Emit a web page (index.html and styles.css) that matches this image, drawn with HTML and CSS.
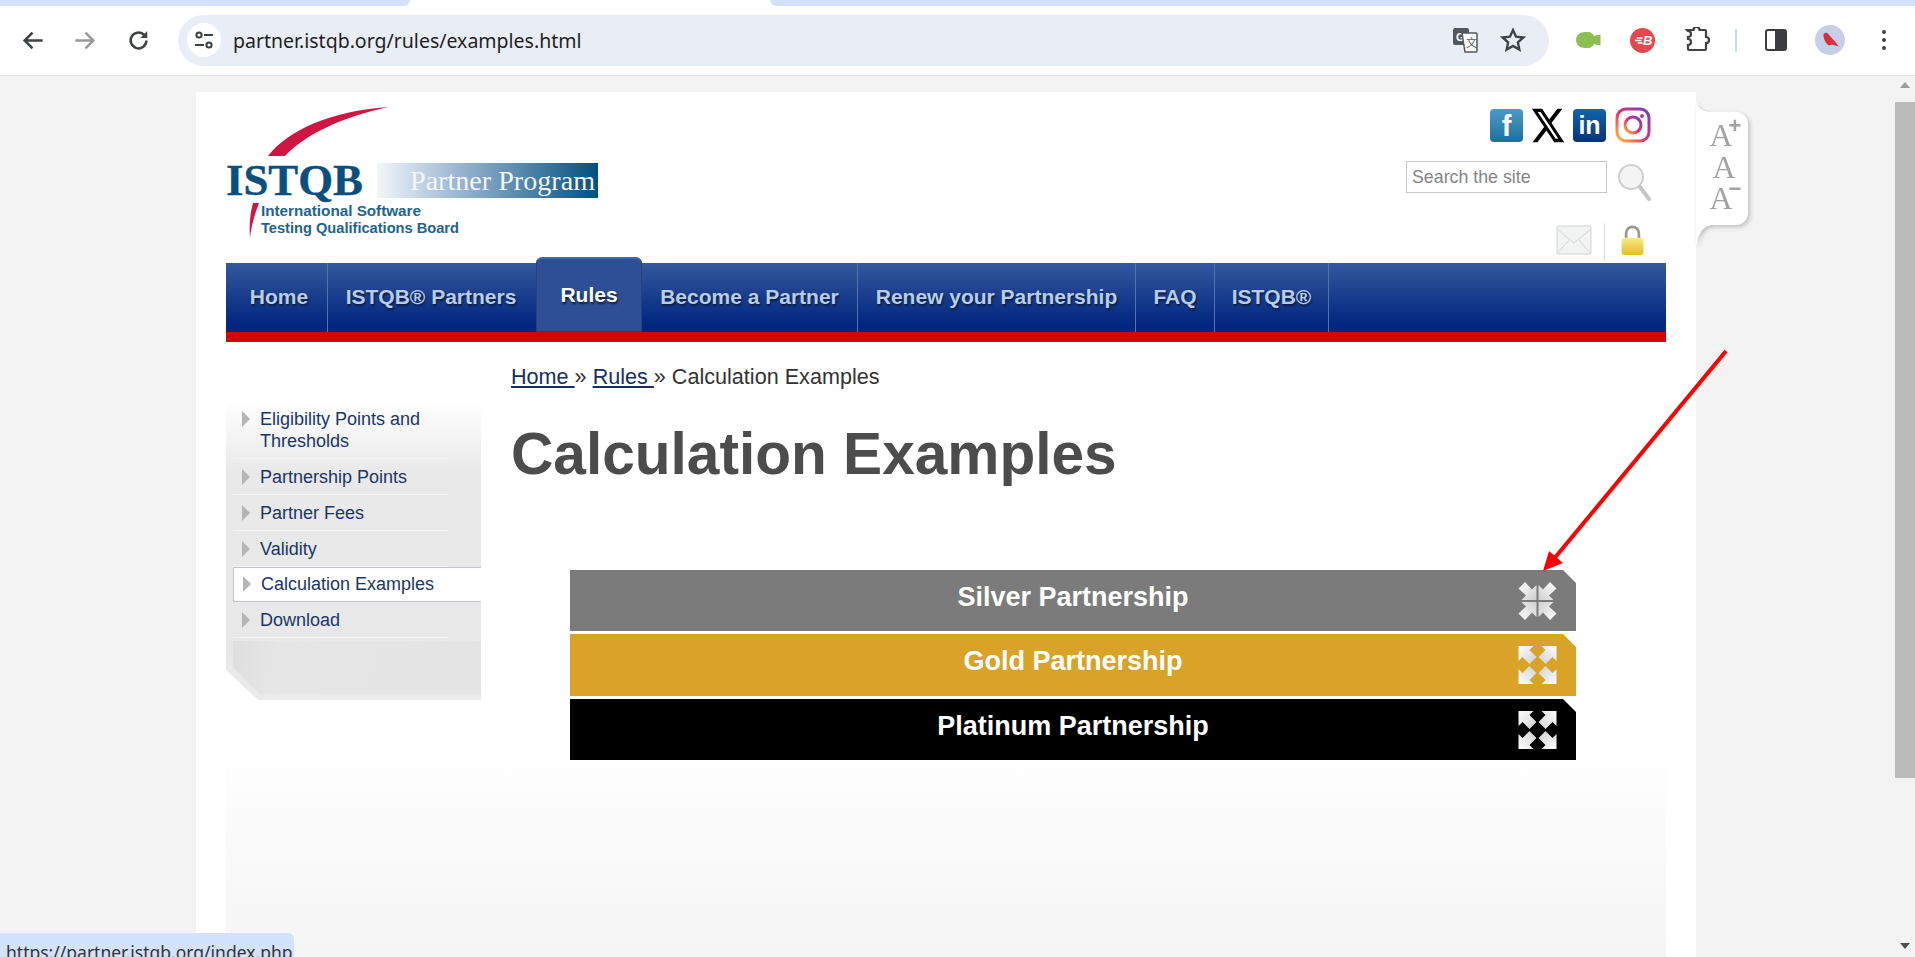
FILE: index.html
```html
<!DOCTYPE html>
<html lang="en">
<head>
<meta charset="utf-8">
<title>Calculation Examples</title>
<link rel="stylesheet" href="styles.css">
</head>
<body>
<header class="chrome">
  <div class="tabstrip"><span class="tab-left"></span><span class="tab-right"></span></div>
  <div class="toolbar">
    <svg class="tb-icon" viewBox="0 0 24 24"><path d="M21 12H5M12 5l-7 7 7 7" class="st-dark"/></svg>
    <svg class="tb-icon fwd" viewBox="0 0 24 24"><path d="M3 12h16M12 5l7 7-7 7" class="st-grey"/></svg>
    <svg class="tb-icon rel" viewBox="0 0 24 24"><path d="M19 12a7 7 0 1 1-2.200-5.100L19 9" class="st-dark"/><path d="M19.800 3.500v6.200h-6.200z" class="fill-dark"/></svg>
    <div class="omnibox">
      <span class="tune"><svg viewBox="0 0 24 24" width="24" height="24"><circle cx="7" cy="7" r="2.600" class="st-thin"/><path d="M12 7h9M3 17h9" class="st-thin"/><circle cx="17" cy="17" r="2.600" class="st-thin"/></svg></span>
      <span class="url">partner.istqb.org/rules/examples.html</span>
      <svg class="omni-translate" viewBox="0 0 26 26"><rect x="1" y="1" width="16" height="17" rx="2" class="fill-darkgrey"/><text x="4" y="14" class="tr-g">G</text><path d="M10 6h14a1 1 0 0 1 1 1v17a1 1 0 0 1-1 1H13l-3-19z" class="tr-box"/><text x="14" y="20" class="tr-x">文</text></svg>
      <svg class="omni-star" viewBox="0 0 24 24"><path d="M12 2.800l2.800 6.200 6.700.7-5 4.500 1.400 6.600-5.900-3.400-5.900 3.400 1.400-6.600-5-4.500 6.700-.7z" class="st-dark"/></svg>
    </div>
    <div class="ext-row">
      <svg class="ext-cam" viewBox="0 0 25 16"><path d="M0 8C0 3 4 0 9 0h3c3 0 5 2 6 4l3-1h3.500v10H21l-3-1c-1 2-3 4-6 4H9C4 16 0 13 0 8z"/></svg>
      <span class="ext-red"><svg viewBox="0 0 26 26"><path d="M5 13h7M7 10.500h6M8 15.500h5" class="st-white"/></svg><i>B</i></span>
      <svg class="ext-puzzle" viewBox="0 0 26 26"><path d="M3 3h6.500a3 3 0 0 1 6 0H21a1 1 0 0 1 1 1v6a3 3 0 0 1 0 6v6a1 1 0 0 1-1 1H5a1 1 0 0 1-1-1v-4a3 3 0 0 0 0-6V10a3 3 0 0 0 0-6z" class="st-dark"/></svg>
      <span class="ext-sep"></span>
      <span class="ext-panel"><span></span></span>
      <span class="avatar"><svg viewBox="0 0 20 20"><path d="M4 5c1-2 3-2 4-1l7 8 3 4-6-2-3 1C6 13 4 9 4 5z" class="bird"/></svg></span>
      <span class="menu-dots"><i></i><i></i><i></i></span>
    </div>
  </div>
</header>

<div class="viewport">
  <main class="page">
    <div class="site">
      <div class="site-head">
        <svg class="logo" viewBox="0 0 375 140" role="img" aria-label="ISTQB Partner Program">
          <defs><linearGradient id="band"><stop offset="0" stop-color="#f2f6fa"/><stop offset=".35" stop-color="#9fb8d4"/><stop offset="1" stop-color="#03507f"/></linearGradient></defs>
          <path class="swoosh" d="M162 7C105 11 62 30 42 56h17C78 36 112 18 162 7z"/>
          <path class="swoosh" d="M27 103h6c-4 10-8 24-9 35-1-12 0-24 3-35z"/>
          <text class="l-istqb" x="0" y="95" textLength="137" lengthAdjust="spacingAndGlyphs">ISTQB</text>
          <rect x="151" y="63" width="221" height="35" fill="url(#band)"/>
          <text class="l-pp" x="184" y="90" textLength="185" lengthAdjust="spacingAndGlyphs">Partner Program</text>
          <text class="l-small" x="35" y="116" textLength="160" lengthAdjust="spacingAndGlyphs">International Software</text>
          <text class="l-small" x="35" y="133" textLength="198" lengthAdjust="spacingAndGlyphs">Testing Qualifications Board</text>
        </svg>
        <div class="tools">
          <div class="social">
            <span class="s-fb">f</span>
            <svg class="s-x" viewBox="0 0 24 24" preserveAspectRatio="none"><path d="M18.244 2.250h3.308l-7.227 8.260 8.502 11.240H16.170l-5.214-6.817L4.990 21.750H1.680l7.730-8.835L1.254 2.250H8.080l4.713 6.231zm-1.161 17.520h1.833L7.084 4.126H5.117z"/></svg>
            <span class="s-in">in</span>
            <svg class="s-ig" viewBox="0 0 36 36"><defs><linearGradient id="ig" x1="0" y1="1" x2="1" y2="0"><stop offset="0" stop-color="#fdc13a"/><stop offset=".45" stop-color="#e8336b"/><stop offset="1" stop-color="#6b3fc9"/></linearGradient></defs><rect x="2" y="2" width="32" height="32" rx="9" class="ig-line"/><circle cx="18" cy="18" r="8" class="ig-line"/><circle cx="27" cy="9" r="2" fill="#b43aa0"/></svg>
          </div>
          <div class="search">
            <input class="search-input" type="text" placeholder="Search the site">
            <svg class="search-icon" viewBox="0 0 34 40"><circle cx="14" cy="14" r="12" class="mag"/><path d="M23 24l9 12" class="mag-h"/></svg>
          </div>
          <div class="utility">
            <svg class="mail" viewBox="0 0 36 30"><rect x="1" y="1" width="34" height="28" rx="1" class="mail-b"/><path d="M1 4l17 14L35 4M1 29l12-14M35 29L23 15" class="mail-l"/></svg>
            <span class="util-sep"></span>
            <svg class="lock" viewBox="0 0 26 34"><defs><linearGradient id="lk" x1="0" y1="0" x2="0" y2="1"><stop offset="0" stop-color="#f6ec8a"/><stop offset="1" stop-color="#e6bc1c"/></linearGradient></defs><path d="M6 16V9a7 7 0 0 1 14 0v7" class="lock-s"/><rect x="1" y="14" width="24" height="19" rx="4" fill="url(#lk)"/></svg>
          </div>
        </div>
      </div>

      <nav class="nav">
        <a class="nav-item nav-home">Home</a>
        <a class="nav-item nav-partners">ISTQB® Partners</a>
        <a class="nav-item nav-active">Rules</a>
        <a class="nav-item nav-become">Become a Partner</a>
        <a class="nav-item nav-renew">Renew your Partnership</a>
        <a class="nav-item nav-faq">FAQ</a>
        <a class="nav-item nav-istqb">ISTQB®</a>
      </nav>
      <div class="nav-rule"></div>

      <div class="body-wrap">
        <aside class="sidebar">
          <a class="side-item side-tall"><i></i><span>Eligibility Points and Thresholds</span></a>
          <a class="side-item"><i></i><span>Partnership Points</span></a>
          <a class="side-item"><i></i><span>Partner Fees</span></a>
          <a class="side-item"><i></i><span>Validity</span></a>
          <a class="side-item side-active"><i></i><span>Calculation Examples</span></a>
          <a class="side-item"><i></i><span>Download</span></a>
          <div class="side-foot"></div>
        </aside>
        <section class="main">
          <p class="crumbs"><a>Home </a> » <a>Rules </a> » Calculation Examples</p>
          <h1 class="title">Calculation Examples</h1>
          <div class="accordion">
            <div class="acc acc-silver"><span class="acc-label">Silver Partnership</span>
              <svg class="acc-icon" viewBox="0 0 38 38"><defs><linearGradient id="arg" x1="0" y1="0" x2="1" y2="1"><stop offset="0" stop-color="#ffffff"/><stop offset="1" stop-color="#cfcfcf"/></linearGradient></defs><g class="ar"><path d="M18 18V3l-4.500 4.500L6.500 0 0 6.500l7.500 7-4.500 4.500z"/><path transform="matrix(-1 0 0 1 38 0)" d="M18 18V3l-4.500 4.500L6.500 0 0 6.500l7.500 7-4.500 4.500z"/><path transform="matrix(1 0 0 -1 0 38)" d="M18 18V3l-4.500 4.500L6.500 0 0 6.500l7.500 7-4.500 4.500z"/><path transform="matrix(-1 0 0 -1 38 38)" d="M18 18V3l-4.500 4.500L6.500 0 0 6.500l7.500 7-4.500 4.500z"/></g></svg>
            </div>
            <div class="acc acc-gold"><span class="acc-label">Gold Partnership</span>
              <svg class="acc-icon" viewBox="0 0 38 38"><g class="ar"><path d="M0 0h15l-4 4 7 7-7 7-7-7-4 4z"/><path transform="matrix(-1 0 0 1 38 0)" d="M0 0h15l-4 4 7 7-7 7-7-7-4 4z"/><path transform="matrix(1 0 0 -1 0 38)" d="M0 0h15l-4 4 7 7-7 7-7-7-4 4z"/><path transform="matrix(-1 0 0 -1 38 38)" d="M0 0h15l-4 4 7 7-7 7-7-7-4 4z"/></g></svg>
            </div>
            <div class="acc acc-black"><span class="acc-label">Platinum Partnership</span>
              <svg class="acc-icon" viewBox="0 0 38 38"><g class="ar"><path d="M0 0h15l-4 4 7 7-7 7-7-7-4 4z"/><path transform="matrix(-1 0 0 1 38 0)" d="M0 0h15l-4 4 7 7-7 7-7-7-4 4z"/><path transform="matrix(1 0 0 -1 0 38)" d="M0 0h15l-4 4 7 7-7 7-7-7-4 4z"/><path transform="matrix(-1 0 0 -1 38 38)" d="M0 0h15l-4 4 7 7-7 7-7-7-4 4z"/></g></svg>
            </div>
          </div>
        </section>
      </div>

      <div class="font-widget">
        <span class="fw fw-plus">A<b>+</b></span>
        <span class="fw fw-mid">A</span>
        <span class="fw fw-minus">A<b>−</b></span>
      </div>
    </div>
  </main>
  <div class="scrollbar">
    <span class="sb-up"></span>
    <span class="sb-thumb"></span>
    <span class="sb-down"></span>
  </div>
</div>

<svg class="annotation" viewBox="0 0 1915 957"><path class="anno-line" d="M1726 351L1553 560"/><path class="anno-head" d="M1543 571l6-20 14 12z"/></svg>
<div class="status">https://partner.istqb.org/index.php</div>
</body>
</html>
```

FILE: styles.css
```css
* { box-sizing: border-box; }
html, body { margin: 0; height: 957px; overflow: hidden; }
body { background: #f3f3f3; font-family: "Liberation Sans", Arial, sans-serif; color: #333; position: relative; display: flex; flex-direction: column; }

/* browser chrome */
.chrome { height: 76px; background: #fff; border-bottom: 1px solid #e2e2e2; flex: none; }
.tabstrip { height: 6px; display: flex; justify-content: space-between; }
.tab-left { width: 410px; background: #d3e3fd; border-bottom-right-radius: 8px; }
.tab-right { width: 1145px; background: #d3e3fd; border-bottom-left-radius: 8px; }
.toolbar { height: 69px; display: flex; align-items: center; padding-left: 19px; padding-bottom: 1px; }
.tb-icon { width: 27px; height: 27px; flex: none; margin-right: 26px; }
.tb-icon.rel { margin-right: 26px; }
.st-dark { fill: none; stroke: #3f4347; stroke-width: 2.200; }
.st-grey { fill: none; stroke: #9a9a9a; stroke-width: 2.200; }
.st-thin { fill: none; stroke: #3c3f43; stroke-width: 2; }
.st-white { fill: none; stroke: #fff; stroke-width: 1.600; }
.fill-dark { fill: #3f4347; }
.fill-darkgrey { fill: #54585c; }
.omnibox { width: 1371px; height: 51px; background: #e9eef6; border-radius: 26px; display: flex; align-items: center; padding: 0 0 0 9px; flex: none; }
.tune { width: 34px; height: 34px; border-radius: 50%; background: #fff; display: flex; align-items: center; justify-content: center; flex: none; }
.url { font-family: "Noto Sans", sans-serif; font-size: 19.500px; color: #1f1f1f; margin-left: 12px; flex: 1; }
.omni-translate { width: 26px; height: 26px; flex: none; margin-right: 22px; }
.tr-g { font: bold 11px "Liberation Sans", sans-serif; fill: #fff; }
.tr-box { fill: #fff; stroke: #54585c; stroke-width: 1.500; }
.tr-x { font: 11px "Noto Sans CJK SC", sans-serif; fill: #54585c; }
.omni-star { width: 26px; height: 26px; flex: none; margin-right: 23px; }
.ext-row { display: flex; align-items: center; margin-left: 27px; }
.ext-cam { width: 25px; height: 16px; fill: #8cc152; flex: none; }
.ext-red { width: 25px; height: 25px; border-radius: 50%; background: #e5484d; margin-left: 29px; display: flex; align-items: center; flex: none; color: #fff; font: italic bold 13px "Liberation Sans", sans-serif; position: relative; }
.ext-red svg { position: absolute; left: 0; top: 0; width: 25px; height: 25px; }
.ext-red i { margin-left: 13px; }
.ext-puzzle { width: 26px; height: 26px; margin-left: 29px; flex: none; }
.ext-sep { width: 2px; height: 23px; background: #c7d9ec; margin-left: 25px; flex: none; }
.ext-panel { width: 22px; height: 22px; border: 2px solid #3a3d40; border-radius: 3px; margin-left: 28px; display: flex; justify-content: flex-end; flex: none; }
.ext-panel span { width: 10px; background: #3a3d40; }
.avatar { width: 30px; height: 30px; border-radius: 50%; background: #c5cfe8; margin-left: 28px; display: flex; align-items: center; justify-content: center; flex: none; }
.avatar svg { width: 22px; height: 22px; }
.bird { fill: #d9303c; }
.menu-dots { display: flex; flex-direction: column; gap: 4px; margin-left: 37px; flex: none; }
.menu-dots i { width: 4px; height: 4px; border-radius: 50%; background: #3f4347; display: block; }

/* page */
.viewport { flex: 1; display: flex; min-height: 0; }
.page { flex: 1; padding: 16px 0 0 196px; min-width: 0; }
.site { width: 1500px; height: 865px; background: #fff; padding: 0 30px; position: relative; }
.site-head { height: 171px; display: flex; justify-content: space-between; padding-top: 8px; }
.logo { width: 375px; height: 140px; flex: none; }
.swoosh { fill: #d01543; }
.l-istqb { font: bold 44px "Liberation Serif", serif; fill: #0a4f7e; stroke: #0a4f7e; stroke-width: .4; }
.l-pp { font: 27px "Liberation Serif", serif; fill: #f2f6fb; }
.l-small { font: bold 15px "Liberation Sans", sans-serif; fill: #1d6490; }

.tools { width: 260px; display: flex; flex-direction: column; align-items: flex-end; margin-right: 14px; position: relative; }
.social { display: flex; align-items: center; gap: 9px; height: 36px; margin-top: 7px; margin-right: 1px; }
.s-fb { width: 33px; height: 33px; border-radius: 4px; background: linear-gradient(#4a9cc8, #1f6f9e); color: #fff; font: bold 29px "Liberation Sans", sans-serif; display: flex; align-items: flex-end; justify-content: center; line-height: 31px; overflow: hidden; }
.s-x { width: 36px; height: 41px; fill: #000; margin: 0 -2px; }
.s-in { width: 33px; height: 33px; border-radius: 4px; background: linear-gradient(#0f65ad, #0a3376); color: #fff; font: bold 25px "Liberation Sans", sans-serif; display: flex; align-items: center; justify-content: center; }
.s-ig { width: 36px; height: 36px; }
.ig-line { fill: none; stroke: url(#ig); stroke-width: 3; }
.search { display: flex; align-items: flex-start; width: 100%; margin-top: 18px; justify-content: flex-end; padding-right: 1px; }
.search-input { width: 201px; height: 32px; border: 1px solid #c6c6c6; padding: 0 5px; font: 17.800px "Liberation Sans", sans-serif; background: #fff; margin-right: 10px; outline: none; }
.search-input::placeholder { color: #858585; opacity: 1; }
.search-icon { width: 34px; height: 40px; margin-top: 2px; }
.mag { fill: #f4f4f4; stroke: #cfcfcf; stroke-width: 2; }
.mag-h { stroke: #c6c6c6; stroke-width: 4; stroke-linecap: round; }
.utility { display: flex; align-items: flex-start; margin-top: 20px; }
.mail { width: 36px; height: 30px; margin-top: 2px; }
.mail-b { fill: #f1f3f3; stroke: #d4d4d4; }
.mail-l { fill: none; stroke: #d4d4d4; }
.util-sep { width: 1px; height: 37px; background: #ddd; margin: 0 15px 0 12px; }
.lock { width: 25px; height: 31px; margin-right: 7px; margin-top: 2px; }
.lock-s { fill: none; stroke: #9a9a8c; stroke-width: 3; }

/* nav */
.nav { height: 69px; display: flex; background: linear-gradient(#34589c, #02267f 90%); }
.nav-item { display: flex; align-items: center; justify-content: center; font-size: 21px; font-weight: bold; color: #b8cde4; text-shadow: 1px 2px 2px #0a1c46; border-right: 1px solid #5473a9; padding-bottom: 1px; }
.nav-home { width: 102px; padding-left: 5px; }
.nav-partners { width: 208px; border-right: 0; padding-right: 2px; }
.nav-active { width: 106px; height: 75px; margin-top: -6px; background: #2e4f95; border: 1px solid #24427f; border-top: 2px solid #3e6aa8; border-radius: 6px 6px 0 0; color: #fff; padding-bottom: 1px; }
.nav-become { width: 216px; }
.nav-renew { width: 278px; }
.nav-faq { width: 79px; }
.nav-istqb { width: 114px; }
.nav-rule { height: 10px; background: #d50409; }

/* body */
.body-wrap { height: 615px; display: flex; background: linear-gradient(#fff 400px, #f5f5f5); }
.sidebar { width: 255px; height: 299px; margin-top: 59px; flex: none; padding: 0 0 0 7px; background: linear-gradient(#fff, #e9e9e9 70px, #e8e8e8 85%, #ebebeb); clip-path: polygon(0 0, 100% 0, 100% 100%, 32px 100%, 0 269px); display: flex; flex-direction: column; }
.side-item { display: flex; height: 36px; padding: 0 0 0 9px; align-items: center; font-size: 18px; color: #1b3668; line-height: 22px; border-bottom: 1px solid #f4f4f4; margin-right: 33px; flex: none; }
.side-tall { height: 58px; }
.side-item i { width: 0; height: 0; border-left: 8px solid #b5b5b5; border-top: 8px solid transparent; border-bottom: 8px solid transparent; flex: none; margin-right: 10px; }
.side-tall i { align-self: flex-start; margin-top: 10px; }
.side-active { margin-right: 0; background: #fff; border: 1px solid #c3c5cd; border-right: 0; height: 35px; padding: 0 0 2px 9px; }
.side-foot { height: 53px; margin-top: 3px; background: linear-gradient(100deg, #dedede, #e6e6e6 18%, #e4e4e4); clip-path: polygon(0 0, 100% 0, 100% 100%, 26px 100%, 0 26px); }
.main { margin-left: 30px; flex: 1; min-width: 0; }
.crumbs { margin: 22px 0 0; font-size: 21.600px; line-height: 26px; color: #333; }
.crumbs a { color: #16315f; text-decoration: underline; }
.title { margin: 29px 0 0; font-size: 58.600px; line-height: 70px; font-weight: bold; color: #4c4c4c; }
.accordion { margin: 81px 0 0 59px; width: 1006px; display: flex; flex-direction: column; gap: 3px; }
.acc { height: 61px; display: flex; align-items: flex-start; justify-content: center; position: relative; clip-path: polygon(0 0, 993px 0, 100% 13px, 100% 100%, 0 100%); }
.acc-label { font-size: 27px; font-weight: bold; color: #fff; line-height: 30px; margin-top: 12px; }
.acc-icon { position: absolute; right: 19px; top: 12px; width: 39px; height: 38px; }
.ar { fill: url(#arg); }
.acc-silver { background: #7b7b7b; }
.acc-gold { background: #d8a327; height: 62px; }
.acc-black { background: #000; }

/* font-size widget */
.font-widget { position: absolute; left: 1500px; top: 20px; width: 52px; height: 113px; background: #fff; border-radius: 0 12px 12px 0; filter: drop-shadow(2px 2px 2px #c0c0c0); display: flex; flex-direction: column; align-items: center; color: #a2a2a2; font-family: "Liberation Serif", serif; }
.font-widget::before { content: ""; position: absolute; left: 0; top: -12px; width: 14px; height: 12px; background: radial-gradient(14px 12px at 100% 0, transparent 98%, #fff); }
.font-widget::after { content: ""; position: absolute; left: 0; bottom: -24px; width: 16px; height: 24px; background: radial-gradient(16px 24px at 100% 100%, transparent 98%, #fff); }
.fw { font-size: 32px; line-height: 33px; position: relative; }
.fw-plus { margin-top: 7px; margin-left: -2px; }
.fw-mid { margin-top: -1px; margin-left: 4px; }
.fw-minus { margin-top: -2px; margin-left: -2px; }
.fw b { position: absolute; left: 19px; top: -6px; font: bold 22px "Liberation Sans", sans-serif; }

/* scrollbar */
.scrollbar { width: 20px; flex: none; position: relative; padding-top: 26px; background: #f3f3f3; display: flex; flex-direction: column; }
.sb-up { position: absolute; top: 6px; left: 5px; border: 5px solid transparent; border-top: 0; border-bottom: 6px solid #9c9c9c; width: 0; height: 0; }
.sb-thumb { height: 676px; background: #bbb; }
.sb-down { position: absolute; bottom: 8px; left: 5px; border: 5px solid transparent; border-bottom: 0; border-top: 6px solid #505050; width: 0; height: 0; }

.annotation { position: absolute; left: 0; top: 0; width: 1915px; height: 957px; pointer-events: none; }
.anno-line { stroke: #f00; stroke-width: 4; fill: none; }
.anno-head { fill: #f00; }
.status { position: absolute; left: 0; bottom: 0; width: 294px; height: 24px; background: #d3e3fd; border-top-right-radius: 6px; padding: 9px 0 0 6px; font: 17.500px/20px "Noto Sans", sans-serif; color: #333; overflow: hidden; white-space: nowrap; }
```
